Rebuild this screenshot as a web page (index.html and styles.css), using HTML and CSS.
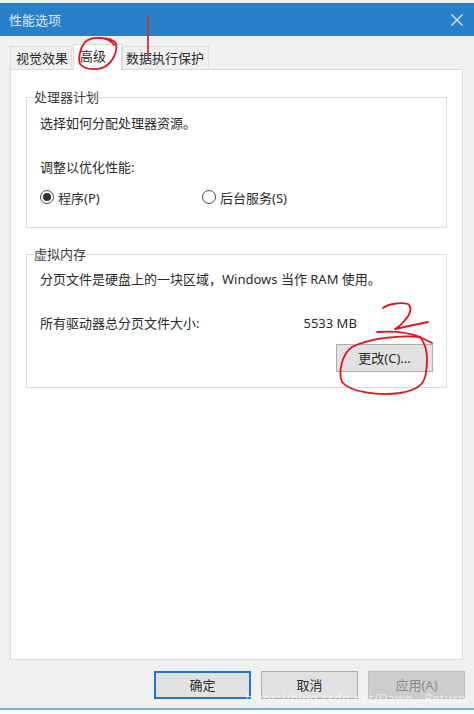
FILE: index.html
```html
<!DOCTYPE html>
<html lang="zh-CN">
  <head>
    <meta charset="UTF-8" />
    <title>性能选项</title>
    <link rel="stylesheet" href="styles.css">
  </head>
  <body>
    <div class="window">
      <div class="title_bar">
        <span>性能选项</span>
        <svg class="close" width="12" height="12" viewBox="0 0 12 12">
          <path d="M0.5 0.5 L11.5 11.5 M11.5 0.5 L0.5 11.5" stroke="#e4f0fa" stroke-width="1.2" fill="none" />
        </svg>
      </div>
      <div class="tab_list">
        <div class="tab">视觉效果</div>
        <div class="tab current">高级</div>
        <div class="tab">数据执行保护</div>
      </div>
      <div class="panel">
        <fieldset class="group">
          <legend>处理器计划</legend>
          <p class="desc">选择如何分配处理器资源。</p>
          <p class="sub">调整以优化性能:</p>
          <div class="radios">
            <label class="radio"><i class="dot checked"></i>程序(P)</label>
            <label class="radio"><i class="dot"></i>后台服务(S)</label>
          </div>
        </fieldset>
        <fieldset class="group memory">
          <legend>虚拟内存</legend>
          <p class="desc">分页文件是硬盘上的一块区域，Windows 当作 RAM 使用。</p>
          <div class="size_row">
            <span>所有驱动器总分页文件大小:</span>
            <span class="size">5533 MB</span>
          </div>
          <div class="change_row">
            <div class="btn change">更改(C)...</div>
          </div>
        </fieldset>
      </div>
      <div class="footer">
        <div class="btn primary">确定</div>
        <div class="btn">取消</div>
        <div class="btn disabled">应用(A)</div>
      </div>
      <div class="bottom_edge"></div>
    </div>

    <!-- 截图上的红笔标注和水印 -->
    <svg class="marks" width="474" height="714" viewBox="0 0 474 714">
      <g fill="none" stroke="#e0141c" stroke-linecap="round" stroke-linejoin="round">
        <path stroke-width="1.8" d="M114 45 C108 36 92 36 85 42 C80 48 78 58 80 64 C86 71 100 70 106 66 C112 62 118 52 116 44 C113 38 104 38 99 38" />
        <path stroke-width="1.8" stroke="#c8323c" d="M148 17 L148 55" />
        <path stroke-width="1.8" d="M383 308 C388 304 400 302 408 304 C412 307 411 314 405 320 C401 325 397 328 395 329 L428 322" />
        <path stroke-width="1.8" d="M377 332 C390 331 405 331 420 337 L432 343" />
        <path stroke-width="1.8" d="M420 337 C400 335 370 338 352 347 C342 354 338 372 342 382 C350 392 378 396 400 393 C418 390 425 384 426 372 C428 360 428 347 420 337" />
      </g>
    </svg>
    <div class="watermark">https://blog.csdn.net/Dawn__Return</div>
  </body>
</html>
```

FILE: styles.css
```css
* {
  margin: 0;
  padding: 0;
  box-sizing: border-box;
}

body {
  width: 474px;
  height: 714px;
  overflow: hidden;
  position: relative;
  font-family: "Noto Sans", "Noto Sans CJK SC", sans-serif;
  font-size: 13px;
  color: #2a2a2a;
  background-color: #f0f0f0;
}

.window {
  height: 714px;
  display: flex;
  flex-direction: column;
  padding-top: 3px;
  background-color: #f0f0f0;
}

.title_bar {
  height: 33px;
  display: flex;
  align-items: center;
  justify-content: space-between;
  padding: 0 9px;
  color: #d8e8f6;
  font-size: 13px;
  background-color: #2a7fc9;
}

.close {
  margin-right: 2px;
}

.tab_list {
  height: 33px;
  display: flex;
  align-items: flex-end;
  padding-left: 10px;
}

.tab {
  height: 23px;
  line-height: 23px;
  padding: 0 3px 0 5px;
  border: 1px solid #dcdcdc;
  border-bottom: 0;
  margin-right: 1px;
  background-color: #f0f0f0;
}

.tab.current {
  height: 26px;
  line-height: 23px;
  padding: 0 15px 0 6px;
  margin-right: 0;
  background-color: #fff;
  position: relative;
  top: 1px;
}

.tab:last-child {
  padding: 0 4px 0 3px;
  margin-right: 0;
}

.panel {
  height: 591px;
  margin: 0 11px 0 10px;
  padding: 19px 15px 0;
  background-color: #fff;
  border: 1px solid #dcdcdc;
}

.group {
  height: 139px;
  padding: 0 13px;
  border: 1px solid #dcdcdc;
}

.group legend {
  margin-left: -6px;
  line-height: 17px;
  color: #3c3c3c;
}

.group.memory {
  height: 142px;
  margin-top: 18px;
}

.desc {
  line-height: 18px;
  margin-top: 8px;
}

.sub {
  line-height: 18px;
  margin-top: 26px;
}

.radios {
  display: flex;
  margin-top: 12px;
}

.radio {
  width: 162px;
  height: 18px;
  display: flex;
  align-items: center;
  gap: 4px;
}

.dot {
  width: 14px;
  height: 14px;
  display: flex;
  align-items: center;
  justify-content: center;
  border: 1px solid #4a4a4a;
  border-radius: 50%;
  background-color: #fff;
}

.dot.checked::after {
  content: "";
  width: 8px;
  height: 8px;
  border-radius: 50%;
  background-color: #333;
}

.memory .desc {
  margin-top: 7px;
}

.size_row {
  display: flex;
  line-height: 18px;
  margin-top: 26px;
}

.size {
  margin-left: 104px;
}

.change_row {
  display: flex;
  justify-content: flex-end;
  margin-top: 12px;
}

.btn {
  width: 97px;
  height: 28px;
  display: flex;
  align-items: center;
  justify-content: center;
  line-height: 14px;
  background-color: #e1e1e1;
  border: 1px solid #adadad;
}

.footer {
  display: flex;
  justify-content: flex-end;
  gap: 10px;
  padding: 11px 9px 0 0;
  height: 48px;
}

.btn.primary {
  border: 2px solid #1f78c8;
}

.btn.disabled {
  color: #8a8a8a;
  background-color: #cccccc;
  border-color: #bfbfbf;
}

.bottom_edge {
  flex: 1;
  background-color: #fff;
  border-top: 2px solid #7fb0d2;
}

.marks {
  position: absolute;
  left: 0;
  top: 0;
  pointer-events: none;
}

.watermark {
  position: absolute;
  right: 8px;
  top: 692px;
  font-size: 12px;
  line-height: 13px;
  letter-spacing: 0.5px;
  color: rgba(255, 255, 255, 0.6);
}
```
